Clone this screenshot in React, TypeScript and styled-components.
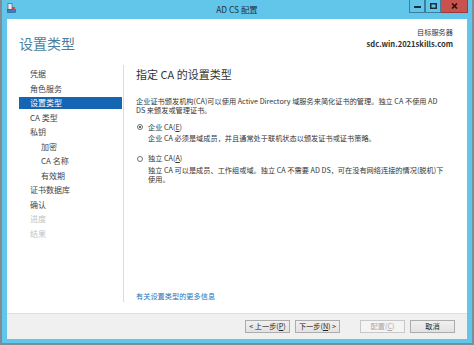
import React from "react";
import styled, { createGlobalStyle } from "styled-components";

const GlobalStyle = createGlobalStyle`
  html, body {
    margin: 0;
    padding: 0;
    background: #7f8c97;
    font-family: "Noto Sans CJK SC", "Noto Sans", sans-serif;
  }
`;

const Window = styled.div`
  margin-left: 2px;
  width: 470px;
  height: 343px;
  display: flex;
  flex-direction: column;
  background: #62c5ea;
  box-sizing: border-box;
  padding: 0 5px 4px 5px;
`;

const TitleBar = styled.div`
  height: 19px;
  display: grid;
  grid-template-columns: 1fr auto 1fr;
  align-items: start;
  color: #1d3447;
  font-size: 8.4px;
`;

const TitleIcon = styled.div`
  padding: 3px 0 0 0;
  height: 10px;
`;

const TitleText = styled.div`
  line-height: 19px;
`;

const Controls = styled.div`
  justify-self: end;
  display: flex;
  margin-right: -1px;
`;

const CtrlButton = styled.div<{ $wide?: boolean; $danger?: boolean }>`
  width: ${(p) => (p.$wide ? 27 : 16)}px;
  height: 13px;
  box-sizing: border-box;
  border: 1px solid ${(p) => (p.$danger ? "#9a3a3a" : "#3b7f9c")};
  border-top: none;
  border-left: ${(p) => (p.$danger ? "none" : "1px solid #3b7f9c")};
  background: ${(p) => (p.$danger ? "#c9524e" : "#62c5ea")};
  display: flex;
  align-items: center;
  justify-content: center;
`;

const Panel = styled.div`
  flex: 1;
  display: flex;
  flex-direction: column;
  background: #ffffff;
`;

const Header = styled.div`
  height: 46px;
  display: flex;
  justify-content: space-between;
  align-items: flex-start;
  padding: 0 14px 0 12px;
  box-sizing: border-box;
`;

const PageTitle = styled.div`
  margin-top: 16px;
  font-size: 14px;
  line-height: 16px;
  color: #4a7f9c;
`;

const ServerInfo = styled.div`
  margin-top: 8px;
  text-align: right;
  font-size: 7.2px;
  line-height: 11px;
  color: #333333;
`;

const ServerName = styled.div`
  font-weight: bold;
  font-size: 7.6px;
`;

const Body = styled.div`
  flex: 1;
  display: flex;
  padding-bottom: 11px;
`;

const Sidebar = styled.div`
  width: 117px;
  box-sizing: border-box;
  border-right: 1px solid #dcdcdc;
  padding: 3px 1px 0 12px;
  display: flex;
  flex-direction: column;
  gap: 2.55px;
`;

const Step = styled.div<{ $active?: boolean; $disabled?: boolean; $sub?: boolean }>`
  height: 12px;
  line-height: 12px;
  font-size: 8px;
  padding-left: ${(p) => (p.$sub ? 22 : 11)}px;
  background: ${(p) => (p.$active ? "#1466b2" : "transparent")};
  color: ${(p) => (p.$active ? "#ffffff" : p.$disabled ? "#c4c4c4" : "#444444")};
`;

const Main = styled.div`
  flex: 1;
  padding: 2px 12px 0 12px;
  display: flex;
  flex-direction: column;
  color: #333333;
  font-size: 7.2px;
  line-height: 9.5px;
`;

const Heading = styled.div`
  font-size: 11px;
  line-height: 14px;
  color: #333333;
  margin-bottom: 15.5px;
`;

const Line = styled.span`
  display: block;
  white-space: nowrap;
`;

const Option = styled.div<{ $first?: boolean }>`
  margin-top: ${(p) => (p.$first ? 6.3 : 9.7)}px;
  display: flex;
  flex-direction: column;
`;

const RadioRow = styled.label`
  display: flex;
  align-items: center;
  height: 11px;
  gap: 5px;
  margin-left: 1px;
`;

const Radio = styled.span<{ $checked?: boolean }>`
  width: 6px;
  height: 6px;
  box-sizing: border-box;
  border: 1px solid #707070;
  border-radius: 50%;
  background: #ffffff;
  display: flex;
  align-items: center;
  justify-content: center;
  &::after {
    content: "";
    width: 2px;
    height: 2px;
    border-radius: 50%;
    background: ${(p) => (p.$checked ? "#333333" : "transparent")};
  }
`;

const Description = styled.div`
  margin-top: 1.5px;
  padding-left: 12px;
`;

const Key = styled.span`
  text-decoration: underline;
`;

const Spacer = styled.div`
  flex: 1;
`;

const HelpLink = styled.a`
  color: #2b74bb;
  text-decoration: none;
  margin-bottom: 1px;
`;

const Footer = styled.div`
  height: 26px;
  box-sizing: border-box;
  border-top: 1px solid #dfdfdf;
  background: #f0f0f0;
  display: flex;
  align-items: center;
  justify-content: flex-end;
  padding: 0 12px 0 0;
`;

const Button = styled.button<{ $gap?: number }>`
  width: 45px;
  height: 13px;
  margin-left: ${(p) => p.$gap ?? 5}px;
  padding: 0;
  box-sizing: border-box;
  border: 1px solid #acacac;
  background: linear-gradient(#f0f0f0, #e2e2e2);
  font-family: inherit;
  font-size: 7.2px;
  line-height: 11px;
  color: #222222;
  &:disabled {
    border-color: #c8c8c8;
    background: #f4f4f4;
    color: #a8a8a8;
  }
`;

const steps = [
  { label: "凭据" },
  { label: "角色服务" },
  { label: "设置类型", active: true },
  { label: "CA 类型" },
  { label: "私钥" },
  { label: "加密", sub: true },
  { label: "CA 名称", sub: true },
  { label: "有效期", sub: true },
  { label: "证书数据库" },
  { label: "确认" },
  { label: "进度", disabled: true },
  { label: "结果", disabled: true },
];

const AppIcon = () => (
  <svg width="9" height="10" viewBox="0 0 9 10">
    <rect x="1" y="0.5" width="4" height="6" fill="#e8eef4" stroke="#5a6e80" strokeWidth="0.8" />
    <rect x="0.5" y="6.5" width="8" height="3" fill="#3f7fc0" stroke="#2c5a8a" strokeWidth="0.6" />
    <rect x="5" y="4" width="3" height="2.5" fill="#d34b3c" />
  </svg>
);

const App: React.FC = () => {
  return (
    <>
      <GlobalStyle />
      <Window>
        <TitleBar>
          <TitleIcon>
            <AppIcon />
          </TitleIcon>
          <TitleText>AD CS 配置</TitleText>
          <Controls>
            <CtrlButton>
              <svg width="7" height="3" viewBox="0 0 7 3">
                <rect x="0" y="1" width="7" height="2" fill="#1d2f3c" />
              </svg>
            </CtrlButton>
            <CtrlButton>
              <svg width="7" height="6" viewBox="0 0 7 6">
                <rect x="0.75" y="0.75" width="5.5" height="4.5" fill="none" stroke="#1d2f3c" strokeWidth="1.5" />
              </svg>
            </CtrlButton>
            <CtrlButton $wide $danger>
              <svg width="7" height="6" viewBox="0 0 7 6">
                <path d="M1 0.5 L6 5.5 M6 0.5 L1 5.5" stroke="#2a1010" strokeWidth="1.6" />
              </svg>
            </CtrlButton>
          </Controls>
        </TitleBar>
        <Panel>
          <Header>
            <PageTitle>设置类型</PageTitle>
            <ServerInfo>
              <div>目标服务器</div>
              <ServerName>sdc.win.2021skills.com</ServerName>
            </ServerInfo>
          </Header>
          <Body>
            <Sidebar>
              {steps.map((s) => (
                <Step key={s.label} $active={s.active} $disabled={s.disabled} $sub={s.sub}>
                  {s.label}
                </Step>
              ))}
            </Sidebar>
            <Main>
              <Heading>指定 CA 的设置类型</Heading>
              <div>
                <Line>
                  企业证书颁发机构(CA)可以使用 Active Directory 域服务来简化证书的管理。独立 CA 不使用 AD
                </Line>
                <Line>DS 来颁发或管理证书。</Line>
              </div>
              <Option $first>
                <RadioRow>
                  <Radio $checked />
                  <span>
                    企业 CA(<Key>E</Key>)
                  </span>
                </RadioRow>
                <Description>
                  <Line>企业 CA 必须是域成员，并且通常处于联机状态以颁发证书或证书策略。</Line>
                </Description>
              </Option>
              <Option>
                <RadioRow>
                  <Radio />
                  <span>
                    独立 CA(<Key>A</Key>)
                  </span>
                </RadioRow>
                <Description>
                  <Line>
                    独立 CA 可以是成员、工作组或域。独立 CA 不需要 AD DS，可在没有网络连接的情况(脱机)下
                  </Line>
                  <Line>使用。</Line>
                </Description>
              </Option>
              <Spacer />
              <HelpLink href="#">有关设置类型的更多信息</HelpLink>
            </Main>
          </Body>
          <Footer>
            <Button>
              &lt; 上一步(<Key>P</Key>)
            </Button>
            <Button>
              下一步(<Key>N</Key>) &gt;
            </Button>
            <Button $gap={20} disabled>
              配置(<Key>C</Key>)
            </Button>
            <Button>取消</Button>
          </Footer>
        </Panel>
      </Window>
    </>
  );
};

export default App;
